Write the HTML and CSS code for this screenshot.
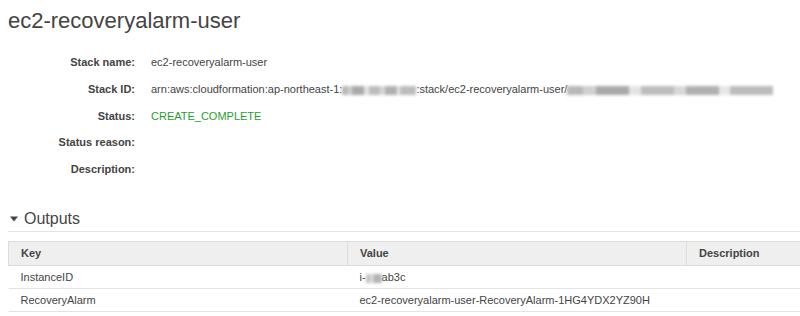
FILE: index.html
```html
<!DOCTYPE html>
<html>
<head>
<meta charset="utf-8">
<link rel="stylesheet" href="styles.css">
</head>
<body>
<div class="page">
  <h1 class="title">ec2-recoveryalarm-user</h1>
  <dl class="details">
    <dt>Stack name:</dt><dd>ec2-recoveryalarm-user</dd>
    <dt>Stack ID:</dt><dd>arn:aws:cloudformation:ap-northeast-1:<span class="blur b1"></span>:stack/ec2-recoveryalarm-user/<span class="blur b2"></span></dd>
    <dt>Status:</dt><dd class="ok">CREATE_COMPLETE</dd>
    <dt>Status reason:</dt><dd></dd>
    <dt>Description:</dt><dd></dd>
  </dl>
  <div class="section-head">
    <svg class="caret" width="8" height="6" viewBox="0 0 8 6"><path d="M0 0.5 L8 0.5 L4 5.5 Z" fill="#444"/></svg>
    <span>Outputs</span>
  </div>
  <table class="outputs">
    <thead>
      <tr><th class="c-key">Key</th><th class="c-val">Value</th><th class="c-desc">Description</th></tr>
    </thead>
    <tbody>
      <tr><td>InstanceID</td><td>i-<span class="blur b3"></span>ab3c</td><td></td></tr>
      <tr><td>RecoveryAlarm</td><td>ec2-recoveryalarm-user-RecoveryAlarm-1HG4YDX2YZ90H</td><td></td></tr>
    </tbody>
  </table>
</div>
</body>
</html>
```

FILE: styles.css
```css
html, body {
  margin: 0;
  padding: 0;
  background: #fff;
  overflow: hidden;
}
body {
  font-family: "Liberation Sans", Arial, sans-serif;
  color: #444;
  width: 800px;
}
.page {
  padding: 8px 0 0 8px;
}
.title {
  margin: 0;
  font-weight: normal;
  font-size: 22px;
  line-height: 26px;
  color: #444;
}
.details {
  display: grid;
  grid-template-columns: 127px 1fr;
  grid-auto-rows: 26.75px;
  column-gap: 16px;
  margin: 20px 0 0 0;
  font-size: 11px;
  line-height: 16px;
}
.details dt {
  text-align: right;
  font-weight: bold;
  color: #444;
}
.details dd {
  margin: 0;
  white-space: nowrap;
  color: #444;
}
.details dd.ok {
  color: #1e9e2f;
}
.blur {
  display: inline-block;
  vertical-align: -2px;
  height: 9px;
  filter: blur(1.6px);
  background: linear-gradient(90deg, #b8b8b8 0 8%, #d0d0d0 8% 14%, #a9a9a9 14% 30%, #e4e4e4 30% 36%, #bdbdbd 36% 52%, #d8d8d8 52% 58%, #b0b0b0 58% 74%, #e8e8e8 74% 79%, #bcbcbc 79% 100%);
}
.b1 { width: 74px; }
.b2 { width: 206px; }
.b3 { width: 16px; background: linear-gradient(90deg, #c4c4c4 0 5px, #ececec 5px 7px, #b4b4b4 7px 16px); }
.section-head {
  display: flex;
  align-items: center;
  gap: 6px;
  margin-top: 21px;
  padding: 0 0 2px 2px;
  border-bottom: 1px solid #e3e3e3;
  font-size: 16px;
  line-height: 20px;
}
.caret {
  display: block;
}
.outputs {
  margin-top: 9px;
  width: 794px;
  border-collapse: collapse;
  font-size: 11px;
  color: #444;
}
.outputs th, .outputs td {
  text-align: left;
  padding: 0 12px;
  white-space: nowrap;
}
.outputs th {
  height: 23px;
  background: #efefef;
  border: 1px solid #dcdcdc;
  font-weight: bold;
  color: #444;
}
.outputs td {
  height: 22px;
  border-bottom: 1px solid #e3e3e3;
}
.outputs .c-key { width: 314px; }
.outputs .c-val { width: 314px; }
```
